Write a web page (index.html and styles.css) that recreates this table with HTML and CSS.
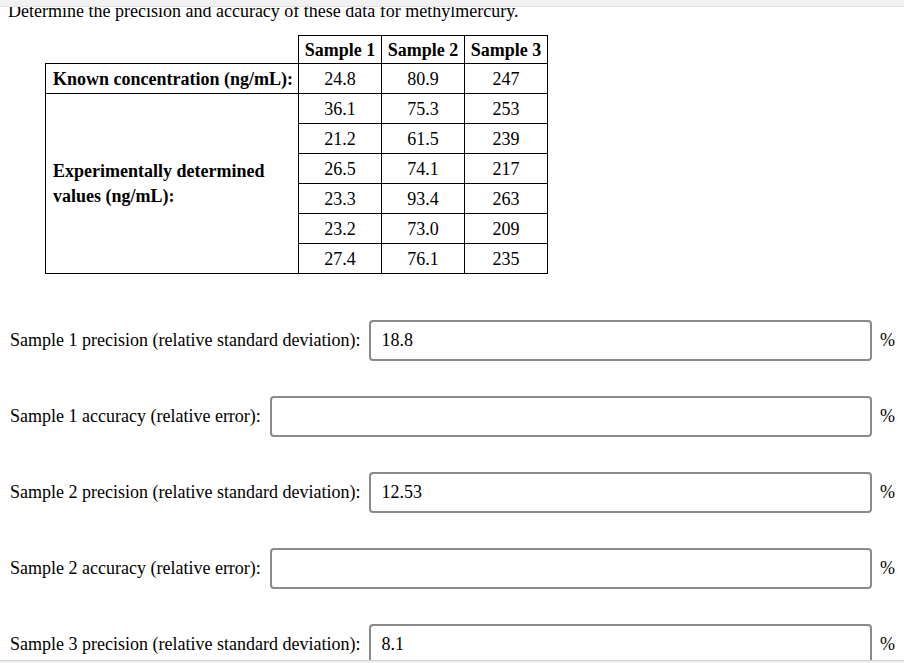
FILE: index.html
```html
<!DOCTYPE html>
<html lang="en">
<head>
<meta charset="utf-8">
<title>Precision and accuracy</title>
<link rel="stylesheet" href="styles.css">
</head>
<body>
<div class="topbar"></div>
<p class="prompt">Determine the precision and accuracy of these data for methylmercury.</p>
<table class="data">
  <colgroup>
    <col class="c-label">
    <col class="c-s">
    <col class="c-s">
    <col class="c-s">
  </colgroup>
  <tr class="head">
    <th class="blank"></th>
    <th>Sample 1</th>
    <th>Sample 2</th>
    <th>Sample 3</th>
  </tr>
  <tr>
    <th class="rowlabel">Known concentration (ng/mL):</th>
    <td>24.8</td><td>80.9</td><td>247</td>
  </tr>
  <tr>
    <th class="rowlabel multi" rowspan="6">Experimentally determined<br>values (ng/mL):</th>
    <td>36.1</td><td>75.3</td><td>253</td>
  </tr>
  <tr><td>21.2</td><td>61.5</td><td>239</td></tr>
  <tr><td>26.5</td><td>74.1</td><td>217</td></tr>
  <tr><td>23.3</td><td>93.4</td><td>263</td></tr>
  <tr><td>23.2</td><td>73.0</td><td>209</td></tr>
  <tr><td>27.4</td><td>76.1</td><td>235</td></tr>
</table>

<div class="answers">
  <div class="row">
    <label class="lbl" for="a1">Sample 1 precision (relative standard deviation):</label>
    <input class="ans" id="a1" type="text" value="18.8">
    <span class="unit">%</span>
  </div>
  <div class="row">
    <label class="lbl" for="a2">Sample 1 accuracy (relative error):</label>
    <input class="ans" id="a2" type="text" value="">
    <span class="unit">%</span>
  </div>
  <div class="row">
    <label class="lbl" for="a3">Sample 2 precision (relative standard deviation):</label>
    <input class="ans" id="a3" type="text" value="12.53">
    <span class="unit">%</span>
  </div>
  <div class="row">
    <label class="lbl" for="a4">Sample 2 accuracy (relative error):</label>
    <input class="ans" id="a4" type="text" value="">
    <span class="unit">%</span>
  </div>
  <div class="row">
    <label class="lbl" for="a5">Sample 3 precision (relative standard deviation):</label>
    <input class="ans" id="a5" type="text" value="8.1">
    <span class="unit">%</span>
  </div>
</div>
<div class="bottombar"></div>
</body>
</html>
```

FILE: styles.css
```css
html, body {
  margin: 0;
  padding: 0;
  background: #ffffff;
}

body {
  font-family: "Liberation Serif", "Times New Roman", serif;
  font-size: 18px;
  color: #000;
  padding: 0 8px;
  overflow: hidden;
  height: 663px;
}

.topbar {
  position: fixed;
  top: 0;
  left: 0;
  right: 0;
  height: 6px;
  background: #f1f1f1;
  border-bottom: 1px solid #e2e2e2;
  z-index: 2;
}

.bottombar {
  position: fixed;
  left: 0;
  right: 0;
  bottom: 0;
  height: 2px;
  background: #f0f0f0;
  border-top: 1px solid #cfcfcf;
  z-index: 2;
}

.prompt {
  margin: 0;
  padding-top: 1px;
  line-height: 21px;
}

.data {
  margin: 13px 0 0 37px;
  border-collapse: collapse;
  table-layout: fixed;
  width: 503px;
}

.c-label { width: 253px; }
.c-s { width: 83px; }

.data th,
.data td {
  border: 1px solid #000;
  line-height: 24px;
  padding: 3px 4px 2px;
  text-align: center;
  font-weight: normal;
}

.data .head th {
  font-weight: bold;
  padding: 2px 4px 1px;
}

.data .head th.blank {
  border-top: none;
  border-left: none;
}

.data th.rowlabel {
  text-align: left;
  font-weight: bold;
  padding-left: 7px;
  padding-right: 4px;
}

.data th.multi {
  vertical-align: middle;
  line-height: 25px;
}

.answers {
  margin-top: 46px;
  padding: 0 3px 0 2px;
  display: flex;
  flex-direction: column;
  gap: 35px;
}

.row {
  display: flex;
  align-items: center;
}

.lbl {
  margin-right: 9px;
  white-space: nowrap;
}

.ans {
  flex: 1;
  height: 41px;
  box-sizing: border-box;
  border: 2px solid #8a8a8a;
  border-radius: 4px;
  padding: 0 10px;
  font-family: "Liberation Serif", "Times New Roman", serif;
  font-size: 18px;
  color: #000;
  background: #fff;
  margin: 0 8px 0 0;
  min-width: 0;
}

.unit {
  width: 13px;
  white-space: nowrap;
}
```
